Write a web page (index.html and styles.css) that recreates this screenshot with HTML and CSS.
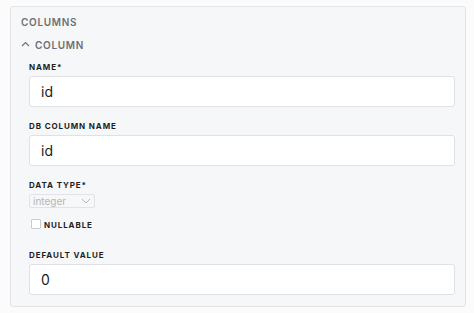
FILE: index.html
```html
<!DOCTYPE html>
<html>
<head>
<meta charset="utf-8">
<link rel="stylesheet" href="styles.css">
</head>
<body>
<div class="page">
  <section class="panel">
    <h2 class="panel-title">COLUMNS</h2>
    <div class="group-head">
      <svg class="chev" width="9" height="6" viewBox="0 0 9 6"><path d="M1 5 L4.5 1.5 L8 5" fill="none" stroke="#707378" stroke-width="1.2"/></svg>
      <span>COLUMN</span>
    </div>
    <div class="fields">
      <div class="field">
        <label class="label">NAME*</label>
        <div class="input">id</div>
      </div>
      <div class="field">
        <label class="label">DB COLUMN NAME</label>
        <div class="input">id</div>
      </div>
      <div class="field">
        <label class="label">DATA TYPE*</label>
        <div class="select">
          <span>integer</span>
          <svg width="10" height="6" viewBox="0 0 10 6"><path d="M1 1 L5 5 L9 1" fill="none" stroke="#b5b8bd" stroke-width="1"/></svg>
        </div>
      </div>
      <div class="check-row">
        <span class="box"></span>
        <span class="label">NULLABLE</span>
      </div>
      <div class="field">
        <label class="label">DEFAULT VALUE</label>
        <div class="input last">0</div>
      </div>
    </div>
  </section>
</div>
</body>
</html>
```
FILE: styles.css
```css
html, body {
  margin: 0;
  padding: 0;
}
body {
  background: #fbfbfc;
  font-family: Inter, "Liberation Sans", sans-serif;
  width: 474px;
  height: 313px;
  overflow: hidden;
}
.page {
  padding: 6px 8px 6px 10px;
}
.panel {
  background: #f6f7f9;
  border: 1px solid #e2e4e7;
  border-radius: 3px;
  padding: 9px 10px 11px 10px;
}
.panel-title {
  margin: 0;
  font-size: 10px;
  font-weight: 600;
  letter-spacing: 0.7px;
  color: #6d7075;
  line-height: 12px;
}
.group-head {
  display: flex;
  align-items: center;
  gap: 5px;
  margin-top: 11px;
  font-size: 10px;
  font-weight: 600;
  letter-spacing: 0.7px;
  color: #6d7075;
  line-height: 12px;
}
.chev { margin-top: -2px; }
.fields {
  padding: 0 0 0 8px;
  margin-top: 11px;
}
.field {
  display: flex;
  flex-direction: column;
}
.label {
  font-size: 8px;
  font-weight: 700;
  letter-spacing: 0.9px;
  color: #1d1f22;
  line-height: 10px;
}
.field .label {
  margin-bottom: 4px;
}
.input {
  height: 29px;
  background: #fff;
  border: 1px solid #dfe1e4;
  border-radius: 3px;
  padding: 0 11px;
  font-size: 14px;
  line-height: 29px;
  color: #1b1c1e;
  margin-bottom: 14px;
}
.input.last {
  margin-bottom: 0;
}
.select {
  width: 58px;
  height: 12px;
  border: 1px solid #e1e3e6;
  border-radius: 2px;
  display: flex;
  align-items: center;
  justify-content: space-between;
  padding: 0 3px 0 3px;
  font-size: 10px;
  color: #b3b6ba;
  line-height: 12px;
}
.check-row {
  display: flex;
  align-items: center;
  gap: 3px;
  margin: 12px 0 20px 2px;
}
.box {
  width: 8px;
  height: 8px;
  border: 1px solid #c9ccd0;
  border-radius: 1px;
  background: #fff;
  margin-top: -3px;
}
```
